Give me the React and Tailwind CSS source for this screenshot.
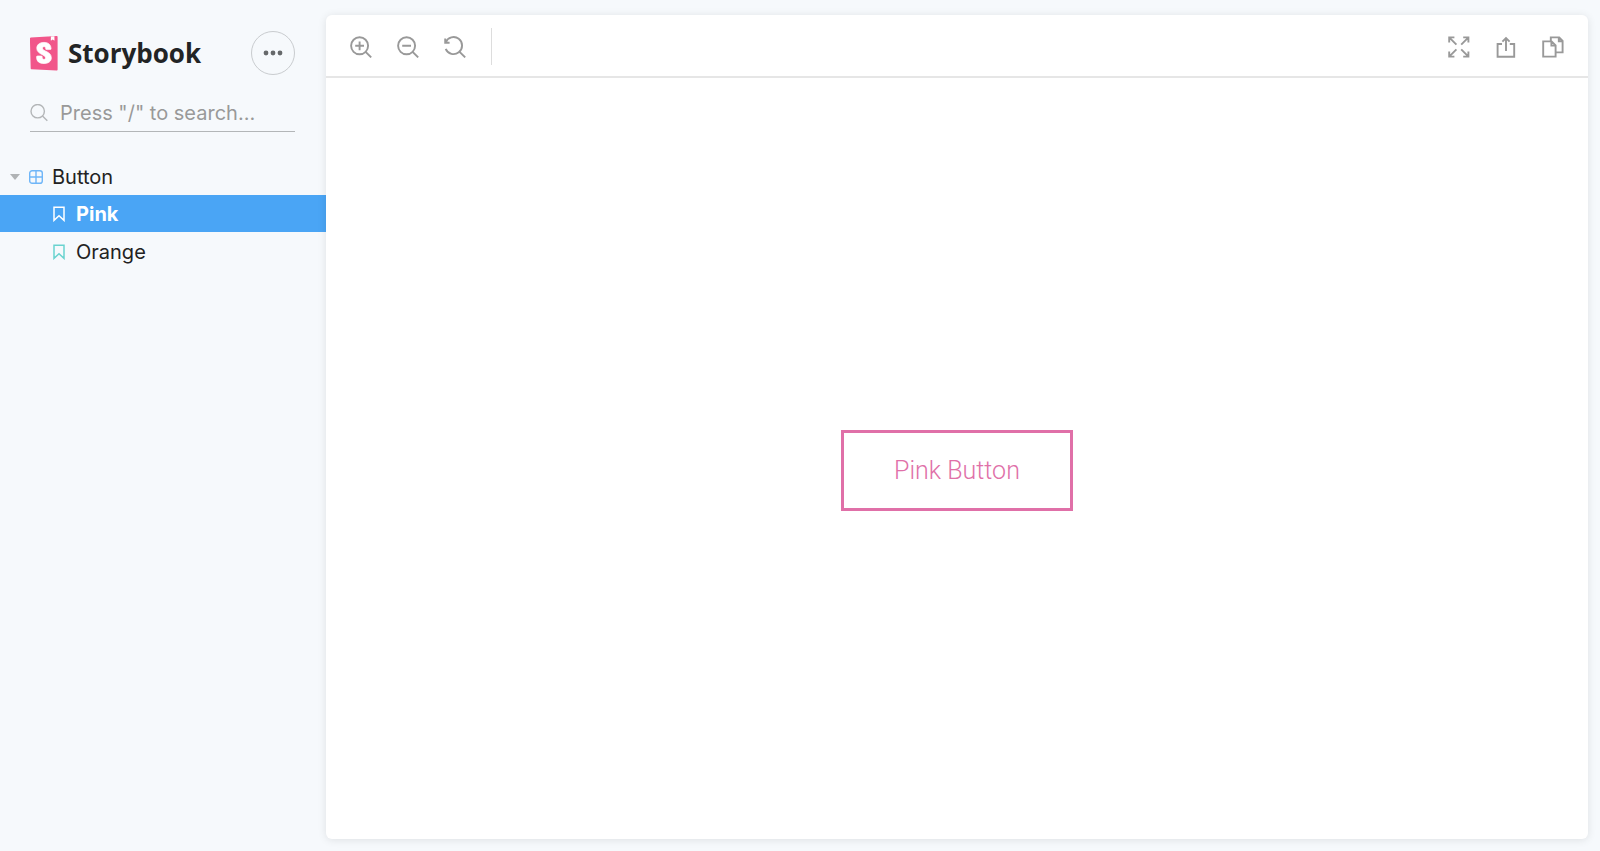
import React, { useState } from "react";

const stories = [
  { id: "pink", name: "Pink", label: "Pink Button" },
  { id: "orange", name: "Orange", label: "Orange Button" },
];

function Logo() {
  return (
    <svg className="w-7 h-[35px] shrink-0" viewBox="0 0 28 35" aria-hidden="true">
      <path
        fill="#F1568A"
        d="M.9 1.5 26.6.1c.6 0 1 .4 1 1v32.3c0 .6-.4 1-1 1L1.7 33.2c-.6 0-1-.4-1-1L-.1 2.6c0-.6.4-1.1 1-1.1Z"
      />
      <path fill="#fff" d="M20.9.4 24.4.2 24.5 4.2c0 .2-.2.3-.4.2l-1.4-1-1.5 1.1c-.2.1-.4 0-.4-.2Z" />
      <path
        fill="#fff"
        stroke="#fff"
        strokeWidth=".5"
        transform="translate(-4.1 .5) scale(1.46 1.37)"
        d="M13.64 9.3c0 .47 3.16.24 3.59-.08 0-3.2-1.72-4.89-4.859-4.89-3.15 0-4.899 1.72-4.899 4.29 0 4.45 5.999 4.53 5.999 6.959 0 .7-.32 1.1-1.05 1.1-.96 0-1.35-.49-1.3-2.16 0-.36-3.649-.48-3.769 0-.27 4.03 2.23 5.2 5.099 5.2 2.79 0 4.969-1.49 4.969-4.18 0-4.77-6.099-4.64-6.099-6.999 0-.97.72-1.1 1.13-1.1.45 0 1.25.07 1.19 1.87z"
      />
    </svg>
  );
}

// Stroke icons for the toolbar, all on a 22px grid
function ToolIcon({ children }) {
  return (
    <svg
      className="size-[22px]"
      viewBox="0 0 22 22"
      fill="none"
      stroke="currentColor"
      strokeWidth="1.9"
      aria-hidden="true"
    >
      {children}
    </svg>
  );
}

function ToolButton({ label, children }) {
  return (
    <button type="button" aria-label={label} className="text-[#999999] hover:text-[#1ea7fd] cursor-pointer">
      <ToolIcon>{children}</ToolIcon>
    </button>
  );
}

function Bookmark() {
  return (
    <svg
      className="w-3 h-4 shrink-0"
      viewBox="0 0 12 16"
      fill="none"
      stroke="currentColor"
      strokeWidth="1.5"
      aria-hidden="true"
    >
      <path d="M1 1.2h10v13.2l-5-4.6-5 4.6Z" />
    </svg>
  );
}

function Sidebar({ selected, onSelect }) {
  return (
    <aside className="w-[326px] shrink-0">
      <div className="flex items-center pl-[30px] pr-[31px] pt-[31px]">
        <a href="#home" className="flex items-center gap-2.5">
          <Logo />
          <span className="font-['Open_Sans',sans-serif] text-[26px] leading-9 font-bold text-[#222425]">
            Storybook
          </span>
        </a>
        <button
          type="button"
          aria-label="Shortcuts"
          className="ml-auto size-11 shrink-0 rounded-full border border-[#c9cccf] flex items-center justify-center text-[#66696b] cursor-pointer"
        >
          <svg className="w-5 h-1.5" viewBox="0 0 20 6" fill="currentColor" aria-hidden="true">
            <circle cx="3" cy="3" r="2.4" />
            <circle cx="10" cy="3" r="2.4" />
            <circle cx="17" cy="3" r="2.4" />
          </svg>
        </button>
      </div>

      <label className="mt-5 ml-[30px] mr-[31px] h-[37px] flex items-center gap-3 border-b border-[#b3b6b8]">
        <svg
          className="size-[18px] shrink-0 text-[#b3b6b8]"
          viewBox="0 0 18 18"
          fill="none"
          stroke="currentColor"
          strokeWidth="1.4"
          aria-hidden="true"
        >
          <circle cx="7.7" cy="7.2" r="6.7" />
          <path d="m12.5 12 4.8 4.8" />
        </svg>
        <input
          type="text"
          aria-label="Search stories"
          placeholder={'Press "/" to search...'}
          className="min-w-0 flex-1 text-[20px] leading-7 text-[#333333] placeholder:text-[#999999] outline-none"
        />
      </label>

      <nav className="mt-[26px] text-[20px] leading-7 text-[#222222]">
        <button type="button" className="w-full h-[37px] pl-2.5 flex items-center cursor-pointer">
          <svg className="w-2.5 h-1.5 shrink-0" viewBox="0 0 10 6" aria-hidden="true">
            <path d="M0 0h10L5 6Z" fill="#b0b3b5" />
          </svg>
          <svg
            className="ml-[9px] size-3.5 shrink-0"
            viewBox="0 0 14 14"
            fill="none"
            stroke="#6fb6f8"
            strokeWidth="1.4"
            aria-hidden="true"
          >
            <rect x=".7" y=".7" width="12.6" height="12.6" rx="2.4" />
            <path d="M7 .7v12.6M.7 7h12.6" />
          </svg>
          <span className="ml-[9px]">Button</span>
        </button>
        <ul className="flex flex-col gap-px">
          {stories.map((story) => (
            <li key={story.id}>
              <button
                type="button"
                onClick={() => onSelect(story.id)}
                className={
                  "w-full h-[37px] pl-[53px] flex items-center gap-[11px] cursor-pointer " +
                  (story.id === selected ? "bg-[#4aa5f5] text-white font-bold" : "")
                }
              >
                <span className={story.id === selected ? "text-white" : "text-[#6ad3cf]"}>
                  <Bookmark />
                </span>
                {story.name}
              </button>
            </li>
          ))}
        </ul>
      </nav>
    </aside>
  );
}

function Toolbar() {
  return (
    <div className="h-[63px] shrink-0 px-6 pt-0.5 flex items-center justify-between border-b-2 border-[#e6e6e6]">
      <div className="flex items-center gap-[25px]">
        <ToolButton label="Zoom in">
          <circle cx="9.6" cy="9.8" r="8.5" />
          <path d="m15.6 15.8 5.6 5.6M9.6 5.4v8.8M5.2 9.8H14" />
        </ToolButton>
        <ToolButton label="Zoom out">
          <circle cx="9.6" cy="9.8" r="8.5" />
          <path d="m15.6 15.8 5.6 5.6M5.2 9.8H14" />
        </ToolButton>
        <ToolButton label="Reset zoom">
          <path d="m15.6 15.8 5.6 5.6M1.7 6.4A8.5 8.5 0 1 1 1.7 12.8M1.2 2.6v4.2h4.4" />
        </ToolButton>
        <span className="w-px h-[37px] bg-[#dddddd]" />
      </div>
      <div className="flex items-center gap-[25px]">
        <ToolButton label="Go full screen">
          <path d="M1.2 6.6V1.4h5.2M1.4 1.6l7 7M15.2 1.4h5.2v5.2M20.2 1.6l-7 7M1.2 15.4v5.2h5.2M1.4 20.4l7-7M15.2 20.6h5.2v-5.2M20.2 20.4l-7-7" />
        </ToolButton>
        <ToolButton label="Open canvas in new tab">
          <path d="M7 8H2.6v12.8h16.6V8h-4.4M11 15V2M7.4 5.6 11 2l3.6 3.6" />
        </ToolButton>
        <ToolButton label="Copy canvas link">
          <path d="M8.8 5V1.4h8.4l3.4 3.4v11.6h-7M16.8 1.4v3.8h3.8M1.2 5.4h8.4l4 4v11.2H1.2ZM9.4 5.4v4.2h4.2" />
        </ToolButton>
      </div>
    </div>
  );
}

export default function App() {
  const [selected, setSelected] = useState("pink");
  const story = stories.find((s) => s.id === selected);

  return (
    <div className="min-h-screen flex bg-[#f6f9fc] font-[Inter,sans-serif]">
      <Sidebar selected={selected} onSelect={setSelected} />
      <main className="flex-1 min-w-0 mt-[15px] mr-3 mb-3 flex flex-col rounded-md bg-white shadow-[0_1px_8px_rgba(0,0,0,0.1)]">
        <Toolbar />
        <div className="flex-1 pt-6 flex items-center justify-center">
          <button
            type="button"
            className={
              "border-3 px-[50px] py-5 font-[Roboto,sans-serif] text-[25px] leading-[35px] font-light cursor-pointer " +
              (selected === "pink" ? "border-[#e070a8] text-[#e070a8]" : "border-[#ff8c00] text-[#ff8c00]")
            }
          >
            {story.label}
          </button>
        </div>
      </main>
    </div>
  );
}
